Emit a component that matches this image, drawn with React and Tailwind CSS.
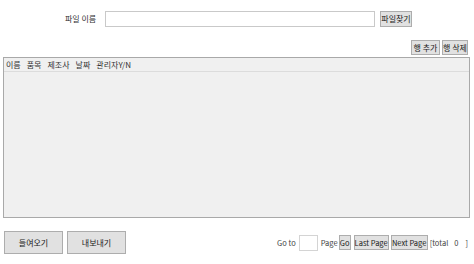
import React from 'react';

const font = '[font-family:"Noto_Sans_CJK_KR","Noto_Sans",sans-serif]';

const Btn = ({ className = '', children }) => (
  <button
    type="button"
    className={`flex items-center justify-center whitespace-nowrap border border-[#adadad] bg-[#e1e1e1] text-[#1a1a1a] leading-none ${className}`}
  >
    {children}
  </button>
);

const columns = ['이름', '품목', '제조사', '날짜', '관리자Y/N'];

export default function App() {
  return (
    <div className={`w-[474px] h-[264px] bg-white flex flex-col text-[8px] text-[#1a1a1a] ${font}`}>
      {/* file row */}
      <div className="flex items-center pt-[11px] pl-[65px]">
        <span className="w-[40px] whitespace-nowrap text-[#333]">파일 이름</span>
        <input className="w-[270px] h-[16px] border border-[#c9c9c9] bg-white outline-none" />
        <Btn className="ml-[5px] w-[32px] h-[16px]">파일찾기</Btn>
      </div>

      {/* row actions */}
      <div className="flex justify-end gap-[2px] pr-[6px] mt-[13px]">
        <Btn className="w-[29px] h-[15px]">행 추가</Btn>
        <Btn className="w-[26px] h-[15px]">행 삭제</Btn>
      </div>

      {/* grid */}
      <div className="ml-[3px] mt-[2px] w-[467px] h-[161px] border border-[#a9a9a9] bg-[#f0f0f0] flex flex-col">
        <div className="flex items-center h-[14px] border-b border-[#dcdcdc] pl-[2px] gap-[6px] text-[#333] whitespace-nowrap">
          {columns.map((c) => (
            <span key={c}>{c}</span>
          ))}
        </div>
      </div>

      {/* footer */}
      <div className="flex items-center mt-[13px] pl-[4px] pr-[6px]">
        <div className="flex gap-[4px]">
          <Btn className="w-[59px] h-[23px]">들여오기</Btn>
          <Btn className="w-[59px] h-[23px]">내보내기</Btn>
        </div>
        <div className="ml-auto flex items-center text-[7.5px] text-[#444] whitespace-nowrap">
          <span>Go to</span>
          <input className="ml-[3px] w-[19px] h-[16px] border border-[#d4d4d4] bg-white outline-none" />
          <span className="ml-[3px]">Page</span>
          <Btn className="ml-[1px] w-[12px] h-[15px]">Go</Btn>
          <Btn className="ml-[3px] w-[35px] h-[15px]">Last Page</Btn>
          <Btn className="ml-[2px] w-[37px] h-[15px]">Next Page</Btn>
          <span className="ml-[2px]">[total</span>
          <span className="ml-[6px]">0</span>
          <span className="ml-[7px]">]</span>
        </div>
      </div>
    </div>
  );
}
